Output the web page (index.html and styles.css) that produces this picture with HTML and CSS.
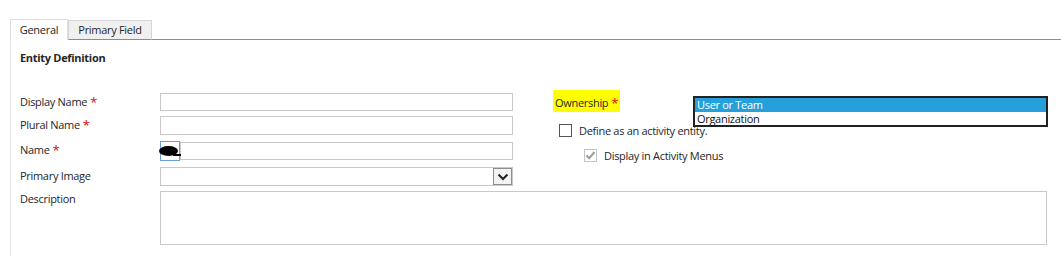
FILE: index.html
```html
<!DOCTYPE html>
<html lang="en">
<head>
  <meta charset="UTF-8">
  <title>Entity Definition</title>
  <link rel="stylesheet" href="styles.css">
</head>
<body>
  <div class="tabs">
    <div class="tab active">General</div>
    <div class="tab">Primary Field</div>
    <div class="tab-fill"></div>
  </div>

  <section class="panel">
    <h3 class="section-title">Entity Definition</h3>

    <div class="form-top">
      <div class="fields">
        <div class="field-row r1">
          <label>Display Name<span class="req">*</span></label>
          <input class="text-input" type="text">
        </div>
        <div class="field-row r2">
          <label>Plural Name<span class="req">*</span></label>
          <input class="text-input tall" type="text">
        </div>
        <div class="field-row r3">
          <label>Name<span class="req">*</span></label>
          <div class="name-wrap">
            <span class="name-prefix"><span class="blot"></span><span class="blot-tail"></span></span>
            <input class="text-input" type="text">
          </div>
        </div>
        <div class="field-row r4">
          <label>Primary Image</label>
          <div class="select">
            <span class="select-btn">
              <svg width="12" height="8" viewBox="0 0 12 8"><path d="M1.5 1.5 L6 6 L10.5 1.5" fill="none" stroke="#222" stroke-width="2"/></svg>
            </span>
          </div>
        </div>
      </div>

      <div class="side">
        <div class="owner">Ownership<span class="req">*</span></div>

        <!-- open dropdown list -->
        <div class="listbox">
          <div class="opt sel">User or Team</div>
          <div class="opt">Organization</div>
        </div>

        <div class="check-row">
          <span class="box"></span>
          <span>Define as an activity entity.</span>
        </div>
        <div class="check-row sub">
          <span class="box disabled">
            <svg width="11" height="11" viewBox="0 0 11 11"><path d="M1.5 5.5 L4.2 8.2 L9.5 2" fill="none" stroke="#9b9b9b" stroke-width="2"/></svg>
          </span>
          <span>Display in Activity Menus</span>
        </div>
      </div>
    </div>

    <div class="desc-row">
      <label>Description</label>
      <textarea class="text-area"></textarea>
    </div>
  </section>
</body>
</html>
```

FILE: styles.css
```css
body {
  font-family: "Open Sans", "Noto Sans", sans-serif;
  font-size: 11px;
  letter-spacing: -0.3px;
  color: #262626;
  margin: 0;
  padding: 0;
  background: #fff;
}

.tabs {
  display: flex;
  margin: 19px 0 0 10px;
  height: 21px;
}

.tab {
  box-sizing: border-box;
  width: 84px;
  height: 20px;
  margin-top: 1px;
  line-height: 18px;
  text-align: center;
  background: #f0f0f0;
  border: 1px solid #d6d6d6;
  border-bottom: 1px solid #8c8c8c;
}

.tab.active {
  width: 58px;
  height: 21px;
  margin-top: 0;
  line-height: 20px;
  background: #fff;
  border: 1px solid #dcdcdc;
  border-bottom: none;
}

.tab-fill {
  flex: 1;
  border-bottom: 1px solid #8c8c8c;
}

.panel {
  margin-left: 10px;
  min-height: 216px;
  padding: 10px 0 0 9px;
  border-left: 1px solid #e3e3e3;
}

.section-title {
  margin: 0;
  font-size: 11px;
  font-weight: bold;
  line-height: 16px;
}

.form-top {
  display: flex;
  margin-top: 24px;
}

.fields {
  width: 493px;
  padding-top: 3px;
}

.field-row {
  display: grid;
  grid-template-columns: 140px 353px;
  align-items: start;
}

.r1 { height: 23px; }
.r2 { height: 25px; }
.r3 { height: 26px; }
.r4 { height: 24px; }

label {
  line-height: 18px;
}

.req {
  color: #e00;
  font-size: 13px;
  margin-left: 3px;
  vertical-align: -1px;
}

.text-input {
  box-sizing: border-box;
  width: 100%;
  height: 18px;
  margin: 0;
  border: 1px solid #c8c8c8;
  padding: 0 3px;
  font: inherit;
}

.text-input.tall {
  height: 19px;
}

.name-wrap {
  display: flex;
  align-items: flex-start;
}

.name-prefix {
  position: relative;
  box-sizing: border-box;
  flex-shrink: 0;
  width: 20px;
  height: 20px;
  border: 1px solid #6a9fd8;
}

.name-wrap .text-input {
  margin-top: 1px;
}

/* redaction scribble over the prefix box */
.blot {
  position: absolute;
  left: -2px;
  top: 4px;
  width: 19px;
  height: 10px;
  background: #000;
  border-radius: 50%;
}

.blot-tail {
  position: absolute;
  left: 12px;
  top: 12px;
  width: 8px;
  height: 2px;
  background: #000;
}

.select {
  box-sizing: border-box;
  height: 19px;
  border: 1px solid #c8c8c8;
  display: flex;
  justify-content: flex-end;
}

.select-btn {
  box-sizing: border-box;
  width: 19px;
  height: 17px;
  border: 1px solid #8d8d8d;
  background: #f3f3f3;
  display: flex;
  align-items: center;
  justify-content: center;
}

.side {
  position: relative;
  flex: 1;
  margin-left: 40px;
}

.owner {
  box-sizing: border-box;
  width: 67px;
  height: 22px;
  padding: 5px 0 0 2px;
  line-height: 16px;
  background: #ffff00;
  white-space: nowrap;
}

.listbox {
  position: absolute;
  left: 140px;
  top: 6px;
  box-sizing: border-box;
  width: 355px;
  height: 31px;
  border: 2px solid #222;
  background: #fff;
  z-index: 2;
}

.opt {
  height: 14px;
  line-height: 14px;
  padding-left: 2px;
  color: #111;
}

.opt.sel {
  height: 14px;
  background: #26a0da;
  color: #fff;
}

.check-row {
  display: flex;
  align-items: center;
  gap: 7px;
  height: 14px;
  margin: 11px 0 0 6px;
}

.check-row.sub {
  margin: 11px 0 0 31px;
}

.box {
  box-sizing: border-box;
  width: 13px;
  height: 13px;
  border: 1px solid #555;
  background: #fff;
  display: flex;
  align-items: center;
  justify-content: center;
}

.box.disabled {
  border-color: #c4c4c4;
}

.desc-row {
  display: grid;
  grid-template-columns: 140px 887px;
  align-items: start;
}

.desc-row label {
  line-height: 16px;
}

.text-area {
  box-sizing: border-box;
  height: 54px;
  margin: 0;
  border: 1px solid #c8c8c8;
  resize: none;
  font: inherit;
}
```
